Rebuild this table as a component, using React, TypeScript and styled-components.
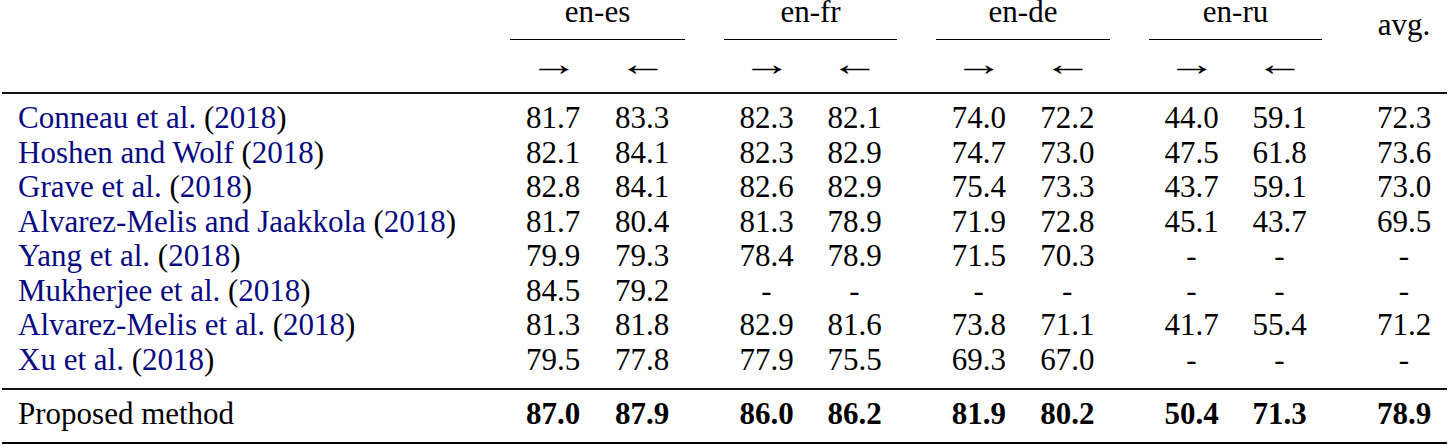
import React from 'react';
import styled, { createGlobalStyle } from 'styled-components';

const GlobalStyle = createGlobalStyle`
  html, body { margin: 0; padding: 0; background: #fff; }
  body { font-family: "Liberation Serif", "Times New Roman", serif; color: #000; }
`;

// name | en-es | en-fr | en-de | en-ru | avg  (36px gaps between them)
const COLS = '470.5px 178px 176px 177px 176px 87.5px';

const Table = styled.div`
  margin-left: 2px;
  width: 1445px;
  font-size: 31px;
  line-height: 34.5px;
`;

const Header = styled.div`
  display: grid;
  grid-template-columns: ${COLS};
  column-gap: 36px;
  padding-bottom: 9.5px;
`;

const PairHead = styled.div`
  display: flex;
  flex-direction: column;
`;

const PairLabel = styled.div`
  text-align: center;
  line-height: 24px;
`;

const CMidRule = styled.div`
  height: 1px;
  background: #000;
  margin: 15px 1.5px 0 1.5px;
`;

const Arrows = styled.div`
  display: grid;
  grid-template-columns: 1fr 1fr;
  text-align: center;
  margin-top: 7px;
`;

const Arrow = styled.span`
  display: inline-block;
  font-size: 33px;
  transform: scaleX(1.5);
`;

const AvgHead = styled.div`
  padding: 7.6px 0 0 1.5px;
  text-align: center;
`;

const Rule = styled.div<{ $h: number; $c?: string }>`
  height: ${p => p.$h}px;
  background: ${p => p.$c || '#111'};
`;

const Body = styled.div<{ $top: number; $bottom: number }>`
  padding: ${p => p.$top}px 0 ${p => p.$bottom}px;
`;

const Row = styled.div<{ $bold?: boolean }>`
  display: grid;
  grid-template-columns: ${COLS};
  column-gap: 36px;
  height: 34.5px;
  font-weight: ${p => (p.$bold ? 700 : 400)};
`;

const NameCell = styled.div`
  padding-left: 16px;
  white-space: nowrap;
  font-weight: 400;
`;

const Cite = styled.span`
  color: #0a0a82;
`;

const Pair = styled.div`
  display: grid;
  grid-template-columns: 1fr 1fr;
  text-align: center;
`;

const AvgCell = styled.div`
  padding-left: 1.5px;
  text-align: center;
`;

type Entry = { author: string; values: string[] };

const rows: Entry[] = [
  { author: 'Conneau et al.', values: ['81.7', '83.3', '82.3', '82.1', '74.0', '72.2', '44.0', '59.1', '72.3'] },
  { author: 'Hoshen and Wolf', values: ['82.1', '84.1', '82.3', '82.9', '74.7', '73.0', '47.5', '61.8', '73.6'] },
  { author: 'Grave et al.', values: ['82.8', '84.1', '82.6', '82.9', '75.4', '73.3', '43.7', '59.1', '73.0'] },
  { author: 'Alvarez-Melis and Jaakkola', values: ['81.7', '80.4', '81.3', '78.9', '71.9', '72.8', '45.1', '43.7', '69.5'] },
  { author: 'Yang et al.', values: ['79.9', '79.3', '78.4', '78.9', '71.5', '70.3', '-', '-', '-'] },
  { author: 'Mukherjee et al.', values: ['84.5', '79.2', '-', '-', '-', '-', '-', '-', '-'] },
  { author: 'Alvarez-Melis et al.', values: ['81.3', '81.8', '82.9', '81.6', '73.8', '71.1', '41.7', '55.4', '71.2'] },
  { author: 'Xu et al.', values: ['79.5', '77.8', '77.9', '75.5', '69.3', '67.0', '-', '-', '-'] },
];

const proposed = ['87.0', '87.9', '86.0', '86.2', '81.9', '80.2', '50.4', '71.3', '78.9'];

const pairs = ['en-es', 'en-fr', 'en-de', 'en-ru'];

function Values({ values }: { values: string[] }) {
  return (
    <>
      {pairs.map((p, i) => (
        <Pair key={p}>
          <span>{values[i * 2]}</span>
          <span>{values[i * 2 + 1]}</span>
        </Pair>
      ))}
      <AvgCell>{values[8]}</AvgCell>
    </>
  );
}

export default function App() {
  return (
    <>
      <GlobalStyle />
      <Table>
        <Header>
          <div />
          {pairs.map(p => (
            <PairHead key={p}>
              <PairLabel>{p}</PairLabel>
              <CMidRule />
              <Arrows>
                <span><Arrow>→</Arrow></span>
                <span><Arrow>←</Arrow></span>
              </Arrows>
            </PairHead>
          ))}
          <AvgHead>avg.</AvgHead>
        </Header>
        <Rule $h={2} />
        <Body $top={7.3} $bottom={10.7}>
          {rows.map(r => (
            <Row key={r.author}>
              <NameCell>
                <Cite>{r.author}</Cite> (<Cite>2018</Cite>)
              </NameCell>
              <Values values={r.values} />
            </Row>
          ))}
        </Body>
        <Rule $h={2} />
        <Body $top={6.6} $bottom={10.9}>
          <Row $bold>
            <NameCell>Proposed method</NameCell>
            <Values values={proposed} />
          </Row>
        </Body>
        <Rule $h={3} $c="#000" />
      </Table>
    </>
  );
}
